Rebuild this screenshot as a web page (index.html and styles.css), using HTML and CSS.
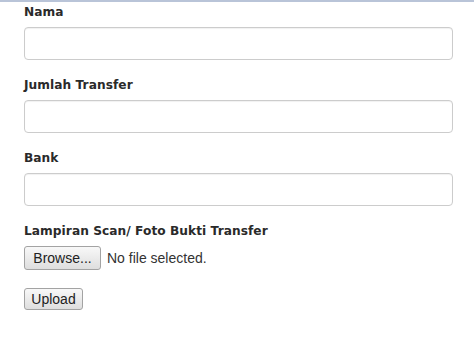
FILE: index.html
```html
<!DOCTYPE html>
<html lang="id">
<head>
<meta charset="utf-8">
<title>Konfirmasi Transfer</title>
<link rel="stylesheet" href="styles.css">
</head>
<body>
<div class="topbar"></div>
<form class="form">
  <div class="group">
    <label class="label" for="nama">Nama</label>
    <input class="field" id="nama" type="text">
  </div>
  <div class="group">
    <label class="label" for="jumlah">Jumlah Transfer</label>
    <input class="field" id="jumlah" type="text">
  </div>
  <div class="group">
    <label class="label" for="bank">Bank</label>
    <input class="field" id="bank" type="text">
  </div>
  <div class="group last">
    <label class="label">Lampiran Scan/ Foto Bukti Transfer</label>
    <div class="file">
      <button type="button" class="btn browse">Browse...</button>
      <span class="file-status">No file selected.</span>
    </div>
  </div>
  <button type="button" class="btn upload">Upload</button>
</form>
</body>
</html>
```
FILE: styles.css
```css
html, body {
  margin: 0;
  padding: 0;
  background: #ffffff;
}
.topbar {
  height: 2px;
  background: #b9c4d8;
}
.form {
  padding: 0 21px 0 24px;
  font-family: "DejaVu Sans", Verdana, sans-serif;
}
.group {
  display: flex;
  flex-direction: column;
  margin-bottom: 15px;
}
.group.last {
  margin-bottom: 18px;
}
.label {
  font-weight: bold;
  font-size: 12.2px;
  letter-spacing: 0.05px;
  line-height: 20px;
  color: #2a2a2a;
  margin-bottom: 5px;
}
.field {
  box-sizing: border-box;
  height: 33px;
  width: 429px;
  border: 1px solid #cccccc;
  border-radius: 4px;
  background: #ffffff;
  box-shadow: inset 0 1px 1px rgba(0,0,0,0.06);
  margin: 0;
}
.file {
  display: flex;
  align-items: center;
  gap: 6px;
}
.btn {
  box-sizing: border-box;
  font-family: "Liberation Sans", Arial, sans-serif;
  font-size: 14px;
  color: #222222;
  background: linear-gradient(#f8f8f8, #dedede);
  border: 1px solid #a3a3a3;
  border-radius: 3px;
  margin: 0;
  display: block;
}
.browse {
  height: 24px;
  width: 77px;
  padding: 0;
}
.upload {
  height: 22px;
  width: 59px;
  padding: 0;
}
.file-status {
  font-family: "Liberation Sans", Arial, sans-serif;
  font-size: 14px;
  color: #333333;
}
```
